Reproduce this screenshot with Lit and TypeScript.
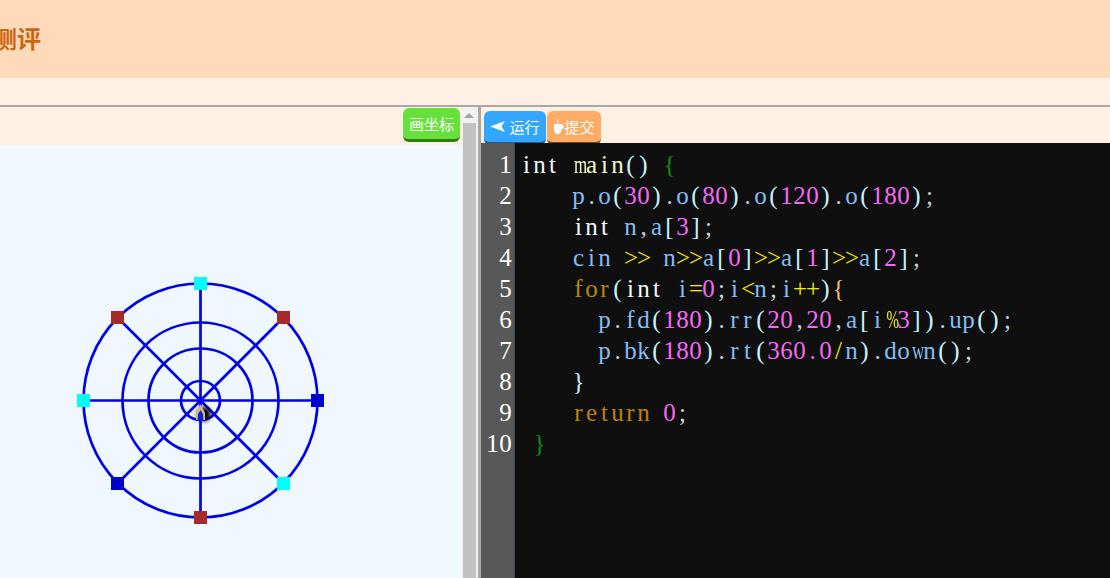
import { LitElement, html, css, svg } from "lit";
import { customElement } from "lit/decorators.js";

type Tok = [string, string];
const K = "k", W = "w", B = "b", P = "p", N = "n", Y = "y", G = "g", M = "m", D = "d", C = "c";
const LINES: Tok[][] = [
  [[W, "int"], [W, " "], [M, "main"], [P, "()"], [W, " "], [G, "{"]],
  [[W, "    "], [B, "p"], [D, "."], [B, "o"], [P, "("], [N, "30"], [P, ")"], [D, "."], [B, "o"], [P, "("], [N, "80"], [P, ")"], [D, "."], [B, "o"], [P, "("], [N, "120"], [P, ")"], [D, "."], [B, "o"], [P, "("], [N, "180"], [P, ")"], [D, ";"]],
  [[W, "    int "], [B, "n"], [D, ","], [B, "a"], [P, "["], [N, "3"], [P, "]"], [D, ";"]],
  [[W, "    "], [B, "cin"], [W, " "], [Y, ">>"], [W, " "], [B, "n"], [Y, ">>"], [B, "a"], [P, "["], [N, "0"], [P, "]"], [Y, ">>"], [B, "a"], [P, "["], [N, "1"], [P, "]"], [Y, ">>"], [B, "a"], [P, "["], [N, "2"], [P, "]"], [D, ";"]],
  [[W, "    "], [K, "for"], [P, "("], [W, "int "], [B, "i"], [Y, "="], [N, "0"], [D, ";"], [B, "i"], [Y, "<"], [B, "n"], [D, ";"], [B, "i"], [Y, "++"], [P, ")"], [C, "{"]],
  [[W, "      "], [B, "p"], [D, "."], [B, "fd"], [P, "("], [N, "180"], [P, ")"], [D, "."], [B, "rr"], [P, "("], [N, "20"], [D, ","], [N, "20"], [D, ","], [B, "a"], [P, "["], [B, "i"], [Y, "%"], [N, "3"], [P, "])"], [D, "."], [B, "up"], [P, "()"], [D, ";"]],
  [[W, "      "], [B, "p"], [D, "."], [B, "bk"], [P, "("], [N, "180"], [P, ")"], [D, "."], [B, "rt"], [P, "("], [N, "360.0"], [Y, "/"], [B, "n"], [P, ")"], [D, "."], [B, "down"], [P, "()"], [D, ";"]],
  [[W, "    "], [P, "}"]],
  [[W, "    "], [K, "return"], [W, " "], [N, "0"], [D, ";"]],
  [[W, " "], [G, "}"]],
];

const CX = 200.5, CY = 400.5, R = 117, DG = 83;
const MARKS: [number, number, string][] = [
  [0, -R, "#00ffff"], [DG, -DG, "#a52a2a"], [R, 0, "#0000cd"], [DG, DG, "#00ffff"],
  [0, R, "#a52a2a"], [-DG, DG, "#0000cd"], [-R, 0, "#00ffff"], [-DG, -DG, "#a52a2a"],
];

const cellClass = (ch: string) => (ch === "m" || ch === "w" ? "sq" : ch === "%" ? "sq2" : "");
const cells = (t: string) => [...t].map((ch) => html`<span class="cell ${cellClass(ch)}">${ch}</span>`);

@customElement("app-root")
export class AppRoot extends LitElement {
  static styles = css`
    :host { display: block; width: 1110px; height: 578px; overflow: hidden; background: #fff0e3; font-family: "Noto Sans CJK SC", "Liberation Sans", sans-serif; }
    .header { height: 78px; background: #ffdab9; display: flex; align-items: center; }
    .title { margin: -3px 0 0 -7px; font-size: 24px; line-height: 32px; font-weight: 700; color: #cc6410; }
    .strip { height: 27px; background: #fff0e3; }
    .main { display: flex; height: 473px; border-top: 2px solid #a9a9a9; box-sizing: border-box; }
    .left { width: 462px; flex: none; display: flex; flex-direction: column; }
    .ltools { height: 38px; flex: none; display: flex; justify-content: flex-end; align-items: flex-start; padding: 1px 2px 0 0; box-sizing: border-box; }
    .canvas { flex: 1; background: #f0f8ff; overflow: hidden; }
    .canvas svg { display: block; }
    .scroll { width: 16px; flex: none; background: #f1f1f1; display: flex; flex-direction: column; align-items: stretch; }
    .sbtn { height: 16px; flex: none; display: flex; justify-content: center; align-items: center; padding-right: 3px; }
    .tri { width: 0; height: 0; border-left: 5px solid transparent; border-right: 5px solid transparent; border-bottom: 5px solid #a3a3a3; }
    .thumb { flex: 1; background: #c1c1c1; margin: 0 2px 0 1px; }
    .divider { width: 3px; flex: none; background: #a9a9a9; }
    .right { flex: 1; min-width: 0; display: flex; flex-direction: column; }
    .rtools { height: 36px; flex: none; display: flex; gap: 1px; padding: 4px 0 0 3px; box-sizing: border-box; }
    .btn { height: 34px; box-sizing: border-box; border-radius: 6px; border-bottom: 3px solid; color: #fff; font-size: 15px; display: flex; align-items: center; justify-content: center; white-space: nowrap; }
    .green { width: 57px; background: #66e03a; border-color: #2f7a14; }
    .blue { width: 62px; background: #33a6ff; border-color: #1b5a8c; gap: 4px; }
    .orange { width: 54px; background: #ffad66; border-color: #7a4414; }
    .editor { flex: 1; display: flex; background: #0f0f0f; min-height: 0; }
    .gutter { width: 34px; flex: none; background: #585858; border-right: 1px solid #3c4a58; padding: 6px 2px 0 0; box-sizing: border-box; color: #fff; font: 25px/31px "Liberation Serif", serif; text-align: right; }
    .code { flex: 1; padding: 6px 0 0 5px; font: 25px/31px "Liberation Serif", serif; white-space: pre; }
    .line { height: 31px; }
    .cell { display: inline-block; width: 13px; text-align: center; }
    .sq { transform: scaleX(0.68); }
    .sq2 { transform: scaleX(0.6); }
    .k { color: #b8860b; } .w { color: #f4fbff; } .b { color: #86bdf2; } .p { color: #c6f2ff; }
    .n { color: #f36cf0; } .y { color: #f5f000; } .g { color: #168a16; } .m { color: #fdfbc8; }
    .d { color: #c8d4dc; } .c { color: #e8c070; }
  `;

  private drawing() {
    return svg`
      <svg width="462" height="433" viewBox="0 145 462 433" xmlns="http://www.w3.org/2000/svg">
        <defs>
          <filter id="sh" x="-100%" y="-100%" width="300%" height="300%"><feGaussianBlur stdDeviation="2.2"></feGaussianBlur></filter>
        </defs>
        <g fill="none" stroke="#0000e6" stroke-width="2.7">
          ${[19.5, 52, 78, R].map((r) => svg`<circle cx=${CX} cy=${CY} r=${r}></circle>`)}
          ${MARKS.map(([x, y]) => svg`<line x1=${CX} y1=${CY} x2=${CX + x} y2=${CY + y}></line>`)}
        </g>
        ${MARKS.map(([x, y, c]) => svg`<rect x=${CX + x - 6.5} y=${CY + y - 6.5} width="13" height="13" fill=${c}></rect>`)}
        <ellipse cx="204" cy="414" rx="7" ry="7" fill="#000" filter="url(#sh)"></ellipse>
        <path d="M200.5 404 L196 413 L196 420 L205 420 L205 413 Z" fill="#d8b890"></path>
        <path d="M198 414 L200.5 410 L203 414 L203.5 421 L197.5 421 Z" fill="#0828c8"></path>
      </svg>`;
  }

  render() {
    return html`
      <div class="header"><h1 class="title">测评</h1></div>
      <div class="strip"></div>
      <div class="main">
        <section class="left">
          <div class="ltools"><div class="btn green">画坐标</div></div>
          <div class="canvas">${this.drawing()}</div>
        </section>
        <div class="scroll"><div class="sbtn"><div class="tri"></div></div><div class="thumb"></div></div>
        <div class="divider"></div>
        <section class="right">
          <div class="rtools">
            <div class="btn blue">
              <svg width="15" height="11" viewBox="0 0 15 11"><path d="M0 5.5 L15 0 L11.5 5.5 L15 11 Z" fill="#fff"></path></svg>
              <span>运行</span>
            </div>
            <div class="btn orange">
              <svg width="11" height="15" viewBox="0 0 11 15"><path d="M1 5 H9 V6 H10.5 V9.5 H9 C8.5 13 7 15 5 15 C3 15 1 13 1 9 Z" fill="#fff"></path><path d="M5 0 C3.5 2 6 2.5 4.5 4.5" fill="none" stroke="#fff" stroke-width="1"></path></svg>
              <span>提交</span>
            </div>
          </div>
          <div class="editor">
            <div class="gutter">${LINES.map((_, i) => html`<div>${cells(String(i + 1))}</div>`)}</div>
            <div class="code">${LINES.map((l) => html`<div class="line">${l.map(([c, t]) => html`<span class=${c}>${cells(t)}</span>`)}</div>`)}</div>
          </div>
        </section>
      </div>
    `;
  }
}
